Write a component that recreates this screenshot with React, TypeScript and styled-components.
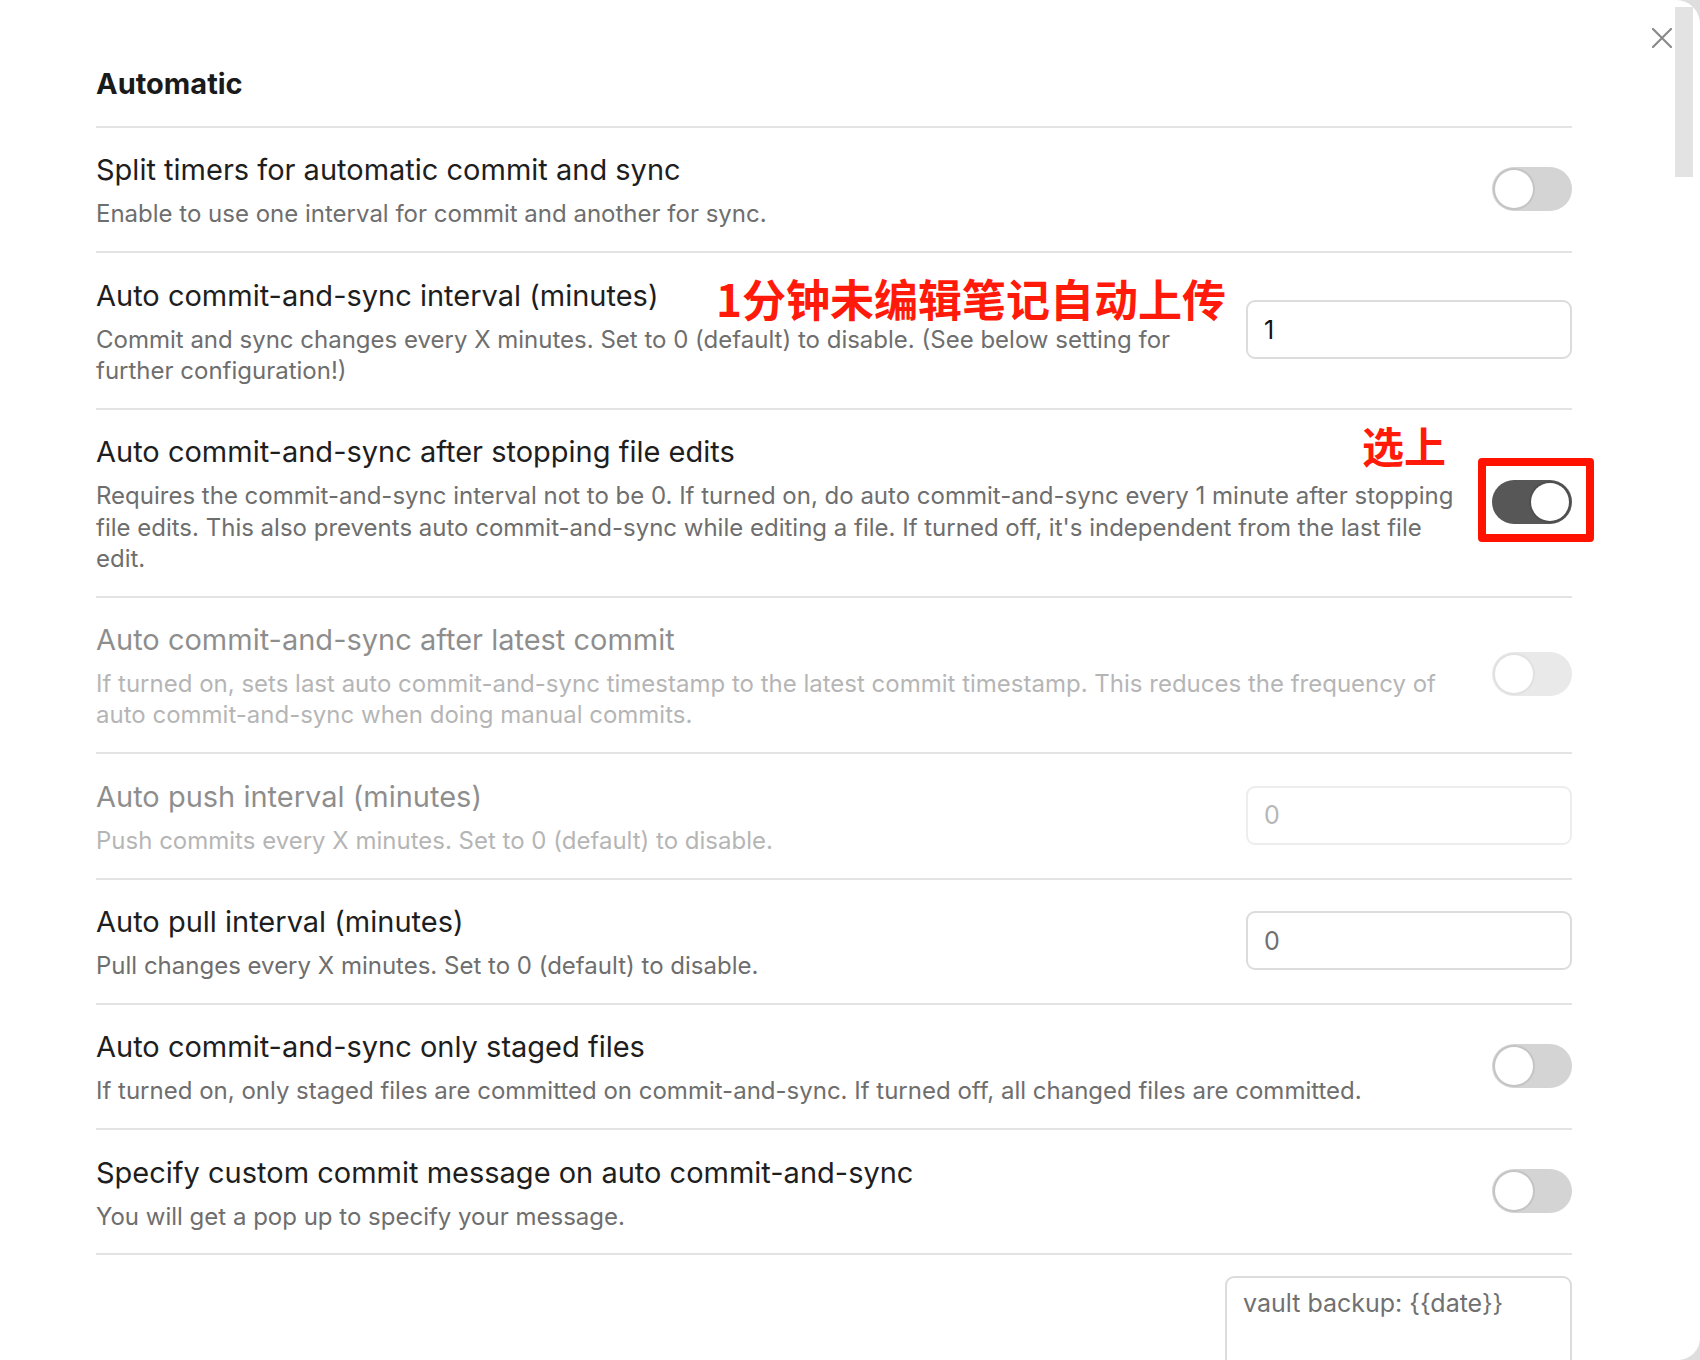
import React from "react";
import styled, { createGlobalStyle } from "styled-components";

const Global = createGlobalStyle`
  html, body { margin: 0; padding: 0; background: #dedede; }
  body { font-family: Inter, "Noto Sans", "Liberation Sans", sans-serif; -webkit-font-smoothing: antialiased; }
  * { box-sizing: border-box; }
`;

const Modal = styled.div`
  position: relative;
  width: 1700px;
  height: 1360px;
  background: #ffffff;
  border-radius: 0 24px 22px 0;
  overflow: hidden;
`;

const Content = styled.div`
  padding: 64px 128px 0 96px;
`;

const Heading = styled.div`
  font-size: 29px;
  font-weight: 700;
  line-height: 40px;
  color: #1a1a1a;
  padding-bottom: 22px;
`;

const Item = styled.div`
  display: flex;
  align-items: center;
  border-top: 2px solid #e3e3e3;
  padding: 24.4px 0 21.6px;
`;

const Info = styled.div<{ $disabled?: boolean }>`
  flex: 1 1 auto;
  min-width: 0;
  margin-right: 32px;
  opacity: ${(p) => (p.$disabled ? 0.5 : 1)};
`;

const Name = styled.div`
  font-size: 29px;
  line-height: 36px;
  color: #1e1e1e;
`;

const Desc = styled.div`
  margin-top: 10px;
  font-size: 24px;
  line-height: 31.3px;
  color: #6e6e6e;
`;

const Control = styled.div<{ $disabled?: boolean }>`
  flex: 0 0 auto;
  display: flex;
  justify-content: flex-end;
  margin-top: -4px;
  opacity: ${(p) => (p.$disabled ? 0.5 : 1)};
`;

const Toggle = styled.div<{ $on?: boolean }>`
  position: relative;
  width: 80px;
  height: 44px;
  border-radius: 22px;
  background: ${(p) => (p.$on ? "#575757" : "#d4d4d4")};
`;

const Knob = styled.div<{ $on?: boolean }>`
  position: absolute;
  top: 3px;
  left: ${(p) => (p.$on ? "39px" : "3px")};
  width: 38px;
  height: 38px;
  border-radius: 50%;
  background: #ffffff;
  box-shadow: 0 0 0 2px ${(p) => (p.$on ? "#4f4f4f" : "#c4c4c4")};
`;

const TextInput = styled.input`
  width: 326px;
  height: 59px;
  border: 2px solid #dcdcdc;
  border-radius: 9px;
  padding: 0 16px;
  font-family: inherit;
  font-size: 25px;
  color: #111;
  background: #fff;
  outline: none;
  &::placeholder { color: #707070; }
`;

const TextArea = styled.textarea`
  width: 347px;
  height: 300px;
  border: 2px solid #dcdcdc;
  border-radius: 9px;
  padding: 8px 16px;
  font-family: inherit;
  font-size: 25px;
  line-height: 34px;
  color: #111;
  resize: none;
  background: #fff;
  outline: none;
  &::placeholder { color: #707070; }
`;

const TextAreaItem = styled(Item)`
  align-items: flex-start;
  padding-top: 25px;
`;

const CloseButton = styled.div`
  position: absolute;
  top: 28px;
  left: 1652px;
  width: 20px;
  height: 20px;
  display: flex;
`;

const ScrollThumb = styled.div`
  position: absolute;
  top: 7px;
  left: 1675px;
  width: 18px;
  height: 170px;
  background: #e3e3e3;
`;

const Annotation = styled.div<{ $size: number }>`
  position: absolute;
  font-family: "Noto Sans CJK SC", Inter, sans-serif;
  font-weight: 700;
  font-size: ${(p) => p.$size}px;
  line-height: 1;
  color: #ff1a0a;
  white-space: nowrap;
`;

const RedBox = styled.div`
  position: absolute;
  left: 1478px;
  top: 458px;
  width: 116px;
  height: 84px;
  border: 8px solid #ff1200;
  border-radius: 4px;
`;

type Row = {
  name: string;
  desc: string;
  kind: "toggle" | "input";
  on?: boolean;
  value?: string;
  placeholder?: string;
  disabled?: boolean;
};

const rows: Row[] = [
  {
    name: "Split timers for automatic commit and sync",
    desc: "Enable to use one interval for commit and another for sync.",
    kind: "toggle",
  },
  {
    name: "Auto commit-and-sync interval (minutes)",
    desc: "Commit and sync changes every X minutes. Set to 0 (default) to disable. (See below setting for further configuration!)",
    kind: "input",
    value: "1",
  },
  {
    name: "Auto commit-and-sync after stopping file edits",
    desc: "Requires the commit-and-sync interval not to be 0. If turned on, do auto commit-and-sync every 1 minute after stopping file edits. This also prevents auto commit-and-sync while editing a file. If turned off, it's independent from the last file edit.",
    kind: "toggle",
    on: true,
  },
  {
    name: "Auto commit-and-sync after latest commit",
    desc: "If turned on, sets last auto commit-and-sync timestamp to the latest commit timestamp. This reduces the frequency of auto commit-and-sync when doing manual commits.",
    kind: "toggle",
    disabled: true,
  },
  {
    name: "Auto push interval (minutes)",
    desc: "Push commits every X minutes. Set to 0 (default) to disable.",
    kind: "input",
    placeholder: "0",
    disabled: true,
  },
  {
    name: "Auto pull interval (minutes)",
    desc: "Pull changes every X minutes. Set to 0 (default) to disable.",
    kind: "input",
    placeholder: "0",
  },
  {
    name: "Auto commit-and-sync only staged files",
    desc: "If turned on, only staged files are committed on commit-and-sync. If turned off, all changed files are committed.",
    kind: "toggle",
  },
  {
    name: "Specify custom commit message on auto commit-and-sync",
    desc: "You will get a pop up to specify your message.",
    kind: "toggle",
  },
];

export default function App() {
  return (
    <>
      <Global />
      <Modal>
        <Content>
          <Heading>Automatic</Heading>
          {rows.map((r) => (
            <Item key={r.name}>
              <Info $disabled={r.disabled}>
                <Name>{r.name}</Name>
                <Desc>{r.desc}</Desc>
              </Info>
              <Control $disabled={r.disabled}>
                {r.kind === "toggle" ? (
                  <Toggle $on={r.on}>
                    <Knob $on={r.on} />
                  </Toggle>
                ) : (
                  <TextInput
                    type="text"
                    defaultValue={r.value}
                    placeholder={r.placeholder}
                    disabled={r.disabled}
                  />
                )}
              </Control>
            </Item>
          ))}
          <TextAreaItem>
            <Info />
            <Control>
              <TextArea placeholder="vault backup: {{date}}" />
            </Control>
          </TextAreaItem>
        </Content>

        <Annotation $size={44} style={{ left: 716, top: 276 }}>1分钟未编辑笔记自动上传</Annotation>
        <Annotation $size={42} style={{ left: 1362, top: 424 }}>选上</Annotation>
        <RedBox />

        <CloseButton>
          <svg width="20" height="20" viewBox="0 0 20 20">
            <path d="M1 1 L19 19 M19 1 L1 19" stroke="#8a8a8a" strokeWidth="2.2" strokeLinecap="round" />
          </svg>
        </CloseButton>
        <ScrollThumb />
      </Modal>
    </>
  );
}
